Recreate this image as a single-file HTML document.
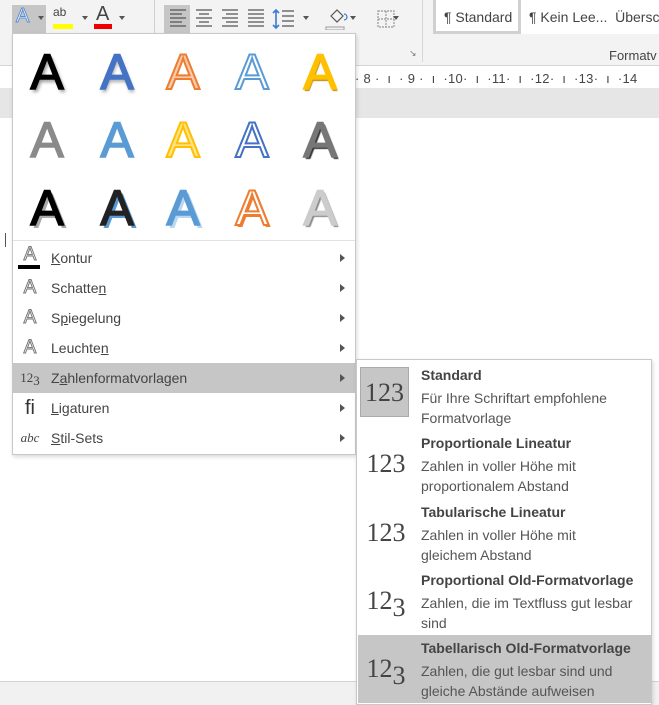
<!DOCTYPE html>
<html><head><meta charset="utf-8"><style>
*{margin:0;padding:0;box-sizing:border-box}
body{width:659px;height:705px;overflow:hidden;background:#fff;font-family:"Liberation Sans",sans-serif;position:relative;color:#444}
.abs{position:absolute}
.A{position:absolute;font:50px "Liberation Sans",sans-serif;line-height:1;width:60px;text-align:center;-webkit-text-stroke:1.5px currentColor}
.mi{position:absolute;left:13px;width:342px;height:30px;font-size:14px;line-height:30px;color:#444}
.mi .t{position:absolute;left:38px}
.mi .ic{position:absolute;left:5px;width:24px;text-align:center;font-family:"Liberation Serif",serif}
.mi .ia{font-family:"Liberation Sans";font-size:19px;color:#fff;-webkit-text-stroke:1px #777}
.mi .ar{position:absolute;right:10px;top:11px;width:0;height:0;border-left:5px solid #555;border-top:4px solid transparent;border-bottom:4px solid transparent}
.si{position:absolute;left:358px;width:293px;height:68px}
.si .n{position:absolute;left:0;top:0;width:56px;height:68px;font:26px "Liberation Serif",serif;color:#444;text-align:center;line-height:68px}
.si b{position:absolute;left:63px;top:5px;font-size:14px;color:#444}
.si .d{position:absolute;left:63px;top:26px;font-size:14px;line-height:20px;color:#555;width:212px}
.dd{position:absolute;top:16px;border-top:4px solid #555;border-left:3px solid transparent;border-right:3px solid transparent}
</style></head><body>
<!-- ribbon -->
<div class="abs" style="left:0;top:0;width:659px;height:66px;background:#f3f3f3"></div>
<div class="abs" style="left:12px;top:5px;width:34px;height:28px;background:#c6c6c6"></div>
<div class="abs" style="left:16px;top:5px;font:20px 'Liberation Sans';color:#fff;-webkit-text-stroke:1px #5b8fd4">A</div>
<div class="dd" style="left:38px"></div>
<div class="abs" style="left:53px;top:5px;font:12px 'Liberation Sans';color:#444">ab</div>
<div class="abs" style="left:53px;top:24px;width:20px;height:5px;background:#ffff00"></div>
<div class="dd" style="left:82px"></div>
<div class="abs" style="left:96px;top:3px;font:20px 'Liberation Sans';color:#444">A</div>
<div class="abs" style="left:94px;top:24px;width:18px;height:5px;background:#e00"></div>
<div class="dd" style="left:119px"></div>
<div class="abs" style="left:154px;top:0;width:1px;height:33px;background:#d0d0d0"></div>
<div class="abs" style="left:164px;top:5px;width:26px;height:28px;background:#c6c6c6"></div>
<svg class="abs" style="left:166px;top:8px" width="240" height="22">
<g stroke="#555" stroke-width="1.2" fill="none">
<path d="M4 2h16M4 6h12M4 10h16M4 14h12M4 18h16"/>
<path d="M30 2h16M33 6h10M30 10h16M33 14h10M30 18h16"/>
<path d="M56 2h16M60 6h12M56 10h16M60 14h12M56 18h16"/>
<path d="M82 2h16M82 6h16M82 10h16M82 14h16M82 18h16"/>
<path d="M116 3h12M116 8h12M116 13h12M116 18h12"/>
<path d="M110 2v18M107 5l3-3 3 3M107 17l3 3 3-3" stroke="#3a7ad0" stroke-width="1.6"/>
<path d="M165 8l6-6 6 6-6 6z"/>
<path d="M178 6a3 3 0 0 1 0 6" stroke="#3a7ad0"/>
<path d="M160 19h18v3h-18z" stroke="#aaa"/>
<path d="M212 3h16v16h-16zM220 3v16M212 11h16" stroke="#999" stroke-dasharray="2 1"/>
</g></svg>
<div class="dd" style="left:303px"></div>
<div class="dd" style="left:350px"></div>
<div class="dd" style="left:393px"></div>
<div class="abs" style="left:409px;top:48px;font-size:9px;color:#777">↘</div>
<div class="abs" style="left:422px;top:0;width:1px;height:62px;background:#d6d6d6"></div>
<div class="abs" style="left:433px;top:0;width:88px;height:34px;border:3px solid #d0d0d0;border-top:none;background:#fff"></div>
<div class="abs" style="left:444px;top:9px;font-size:14px;color:#444">¶ Standard</div>
<div class="abs" style="left:521px;top:0;width:138px;height:34px;background:#fff"></div>
<div class="abs" style="left:529px;top:9px;font-size:14px;color:#444;white-space:nowrap">¶ Kein Lee...&nbsp;&nbsp;Übersc</div>
<div class="abs" style="left:609px;top:48px;font-size:13px;color:#444">Formatv</div>
<div class="abs" style="left:0;top:65px;width:659px;height:1px;background:#d6d6d6"></div>
<div class="abs" style="left:0;top:66px;width:659px;height:22px;background:#fff"></div>
<div class="abs" style="left:355px;top:71px;font-size:13px;color:#444;white-space:pre;letter-spacing:0.3px">· 8 ·  ı  · 9 ·  ı  ·10·  ı  ·11·  ı  ·12·  ı  ·13·  ı  ·14</div>
<div class="abs" style="left:0;top:88px;width:659px;height:30px;background:#e6e6e6"></div>
<div class="abs" style="left:0;top:681px;width:659px;height:24px;background:#f1f1f1;border-top:1px solid #d4d4d4"></div>
<div class="abs" style="left:5px;top:233px;width:1px;height:14px;background:#555"></div>
<!-- menu -->
<div class="abs" style="left:12px;top:33px;width:344px;height:422px;background:#fff;border:1px solid #c8c8c8;box-shadow:1px 2px 4px rgba(0,0,0,.15)"></div>
<div class="A" style="left:17px;top:47px;color:#000;text-shadow:2px 3px 3px #999">A</div>
<div class="A" style="left:87px;top:47px;color:#4472c4;text-shadow:1px 3px 3px #aaa">A</div>
<div class="A" style="left:153px;top:47px;color:#f8cbad;-webkit-text-stroke:2px #ed7d31">A</div>
<div class="A" style="left:222px;top:47px;color:#fff;-webkit-text-stroke:2px #5b9bd5">A</div>
<div class="A" style="left:290px;top:47px;color:#ffc000;text-shadow:1px 2px 1px #b8860b">A</div>
<div class="A" style="left:17px;top:115px;color:#8a8a8a">A</div>
<div class="A" style="left:87px;top:115px;color:#5b9bd5">A</div>
<div class="A" style="left:153px;top:115px;color:#ffe38a;-webkit-text-stroke:2px #ffc000">A</div>
<div class="A" style="left:222px;top:115px;color:#fff;-webkit-text-stroke:2px #4472c4">A</div>
<div class="A" style="left:290px;top:115px;color:#777;text-shadow:2px 2px 1px #333">A</div>
<div class="A" style="left:17px;top:183px;color:#000;text-shadow:3px 3px 0 #aaa">A</div>
<div class="A" style="left:87px;top:183px;color:#222;text-shadow:3px 3px 0 #5b9bd5">A</div>
<div class="A" style="left:153px;top:183px;color:#5b9bd5;text-shadow:3px 3px 0 #bcd7f0">A</div>
<div class="A" style="left:222px;top:183px;color:#fff;-webkit-text-stroke:2px #ed7d31;text-shadow:2px 2px 0 #ed7d31">A</div>
<div class="A" style="left:290px;top:183px;color:#ccc;text-shadow:2px 2px 1px #888">A</div>
<div class="abs" style="left:13px;top:240px;width:342px;height:1px;background:#e2e2e2"></div>
<div class="mi" style="top:243px"><span class="ic ia" style="line-height:24px">A</span><div class="abs" style="left:5px;top:22px;width:22px;height:4px;background:#000"></div><span class="t"><u>K</u>ontur</span><span class="ar"></span></div>
<div class="mi" style="top:273px"><span class="ic ia">A</span><span class="t">Schatte<u>n</u></span><span class="ar"></span></div>
<div class="mi" style="top:303px"><span class="ic ia">A</span><span class="t">S<u>p</u>iegelung</span><span class="ar"></span></div>
<div class="mi" style="top:333px"><span class="ic ia">A</span><span class="t">Leuchte<u>n</u></span><span class="ar"></span></div>
<div class="mi" style="top:363px;background:#c6c6c6"><span class="ic" style="font-size:13px">12<span style="position:relative;top:3px">3</span></span><span class="t">Z<u>a</u>hlenformatvorlagen</span><span class="ar"></span></div>
<div class="mi" style="top:393px"><span class="ic" style="font-family:'Liberation Sans';font-size:20px;color:#333">fi</span><span class="t"><u>L</u>igaturen</span><span class="ar"></span></div>
<div class="mi" style="top:423px"><span class="ic" style="font-style:italic;font-size:13px">abc</span><span class="t"><u>S</u>til-Sets</span><span class="ar"></span></div>
<!-- submenu -->
<div class="abs" style="left:356px;top:359px;width:296px;height:346px;background:#fff;border:1px solid #c8c8c8;box-shadow:1px 2px 4px rgba(0,0,0,.15)"></div>
<div class="si" style="top:362px"><div class="n" style="left:2px;top:5px;width:49px;height:50px;background:#c6c6c6;border:1px solid #aaa;line-height:50px">123</div><b>Standard</b><div class="d">Für Ihre Schriftart empfohlene Formatvorlage</div></div>
<div class="si" style="top:430px"><div class="n">123</div><b>Proportionale Lineatur</b><div class="d">Zahlen in voller Höhe mit proportionalem Abstand</div></div>
<div class="si" style="top:499px"><div class="n">123</div><b>Tabularische Lineatur</b><div class="d">Zahlen in voller Höhe mit gleichem Abstand</div></div>
<div class="si" style="top:567px"><div class="n">12<span style="position:relative;top:7px">3</span></div><b>Proportional Old-Formatvorlage</b><div class="d">Zahlen, die im Textfluss gut lesbar sind</div></div>
<div class="si" style="top:635px;background:#c6c6c6"><div class="n">12<span style="position:relative;top:7px">3</span></div><b>Tabellarisch Old-Formatvorlage</b><div class="d">Zahlen, die gut lesbar sind und gleiche Abstände aufweisen</div></div>
</body></html>
